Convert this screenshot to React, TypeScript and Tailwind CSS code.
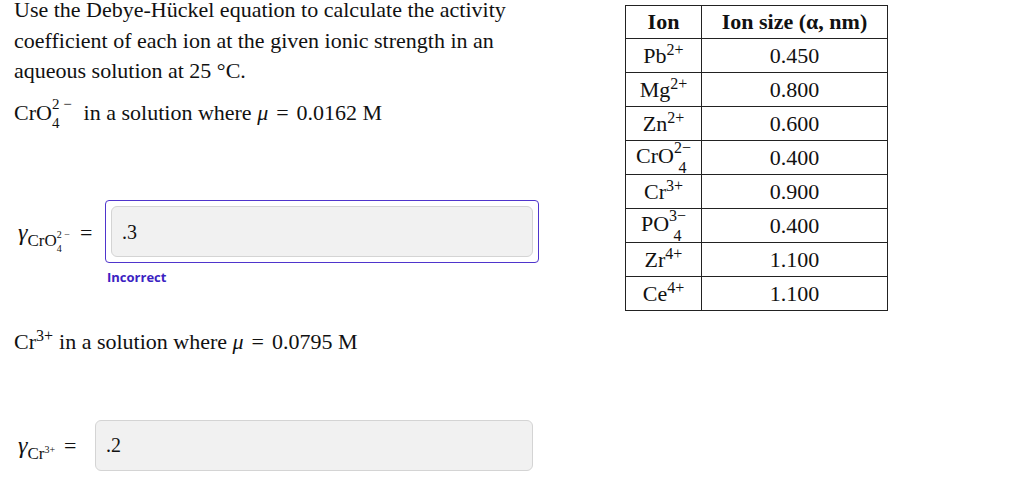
import type { ReactNode } from "react";

const serif = { fontFamily: '"Liberation Serif", "Times New Roman", serif' };

// stacked super/subscript, e.g. CrO4 2-
function Stack({ sup, sub, size = "text-[14px]" }: { sup: string; sub: string; size?: string }) {
  return (
    <span className={`inline-flex flex-col align-middle leading-none ${size}`}>
      <span className="-translate-y-[2px]">{sup}</span>
      <span className="translate-y-[2px]">{sub}</span>
    </span>
  );
}

function Sup({ children, size = "text-[16px]" }: { children: ReactNode; size?: string }) {
  return <span className={`relative -top-[8px] ${size}`}>{children}</span>;
}

const rows: { ion: ReactNode; size: string }[] = [
  { ion: <>Pb<Sup>2+</Sup></>, size: "0.450" },
  { ion: <>Mg<Sup>2+</Sup></>, size: "0.800" },
  { ion: <>Zn<Sup>2+</Sup></>, size: "0.600" },
  { ion: <>CrO<Stack sup="2−" sub="4" size="text-[16px]" /></>, size: "0.400" },
  { ion: <>Cr<Sup>3+</Sup></>, size: "0.900" },
  { ion: <>PO<Stack sup="3−" sub="4" size="text-[16px]" /></>, size: "0.400" },
  { ion: <>Zr<Sup>4+</Sup></>, size: "1.100" },
  { ion: <>Ce<Sup>4+</Sup></>, size: "1.100" },
];

function IonTable() {
  const cell = "border border-[#222] p-0 text-center text-[22px] leading-none";
  return (
    <table className="mt-[5px] w-[263px] self-start border-collapse text-[#111]" style={serif}>
      <thead>
        <tr className="h-[33px]">
          <th className={`${cell} w-[76px] font-bold`} style={serif}>Ion</th>
          <th className={`${cell} font-bold`} style={serif}>Ion size (α, nm)</th>
        </tr>
      </thead>
      <tbody>
        {rows.map((r, i) => (
          <tr key={i} className="h-[34px]">
            <td className={cell} style={serif}>{r.ion}</td>
            <td className={cell} style={serif}>{r.size}</td>
          </tr>
        ))}
      </tbody>
    </table>
  );
}

function AnswerBox({ value, flagged }: { value: string; flagged?: boolean }) {
  const inner = (
    <div className="flex h-[51px] items-center rounded-[6px] border border-[#d4d4d4] bg-[#f1f1f1] pl-[10px] text-[20px] text-[#111]" style={serif}>
      {value}
    </div>
  );
  if (!flagged) return <div className="w-[438px]">{inner}</div>;
  return (
    <div className="w-[434px] rounded-[4px] border-[1.5px] border-[#4f35cc] p-[5px]">{inner}</div>
  );
}

export default function App() {
  return (
    <div className="flex h-[490px] w-[1024px] overflow-hidden bg-white text-[#111]">
      <div className="w-[625px] shrink-0 pl-[14px]" style={serif}>
        <p className="-mt-[5px] w-[510px] text-[22px] leading-[30.5px]">
          Use the Debye-Hückel equation to calculate the activity coefficient of each ion at the given ionic
          strength in an aqueous solution at 25 °C.
        </p>

        <p className="mt-[10px] text-[22px] leading-[32px]">
          CrO<Stack sup="2 −" sub="4" size="text-[15px]" />
          <span className="ml-[12px]">in a solution where </span>
          <i>μ</i>
          <span className="mx-[8px]">=</span>0.0162 M
        </p>

        <div className="mt-[71px] flex items-center">
          <span className="w-[91px] whitespace-nowrap pl-[4px] text-[24px]">
            <i>γ</i>
            <span className="relative top-[6px] text-[17px]">
              CrO<Stack sup="2 −" sub="4" size="text-[10px]" />
            </span>
            <span className="ml-[10px] text-[22px]">=</span>
          </span>
          <AnswerBox value=".3" flagged />
        </div>
        <div
          className="ml-[93px] mt-[5px] text-[13px] font-bold text-[#3b22c2]"
          style={{ fontFamily: '"Open Sans", "Noto Sans", sans-serif' }}
        >
          Incorrect
        </div>

        <p className="mt-[38px] text-[22px] leading-[32px]">
          Cr<Sup>3+</Sup>
          <span className="ml-[6px]">in a solution where </span>
          <i>μ</i>
          <span className="mx-[8px]">=</span>0.0795 M
        </p>

        <div className="mt-[60px] flex items-center">
          <span className="w-[81px] whitespace-nowrap pl-[4px] text-[24px]">
            <i>γ</i>
            <span className="relative top-[6px] text-[17px]">
              Cr<span className="relative -top-[6px] text-[10px]">3+</span>
            </span>
            <span className="ml-[9px] text-[22px]">=</span>
          </span>
          <AnswerBox value=".2" />
        </div>
      </div>
      <IonTable />
    </div>
  );
}
